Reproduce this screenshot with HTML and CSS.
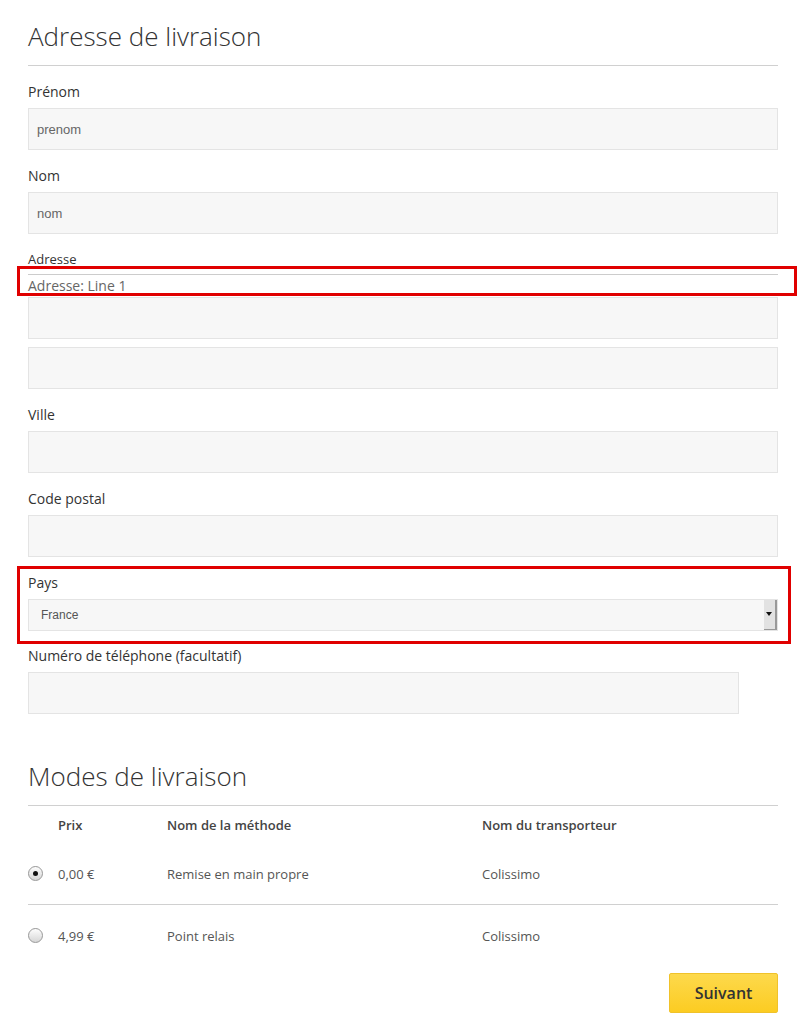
FILE: index.html
```html
<!DOCTYPE html>
<html lang="fr">
<head>
    <meta charset="UTF-8">
    <meta name="viewport" content="width=device-width, initial-scale=1.0">
    <title>Adresse de livraison</title>
    <link rel="stylesheet" href="styles.css">
</head>
<body>
    <div class="page">
        <h1 class="section-title">Adresse de livraison</h1>

        <div class="field">
            <label>Prénom</label>
            <input type="text" placeholder="prenom">
        </div>

        <div class="field">
            <label>Nom</label>
            <input type="text" placeholder="nom">
        </div>

        <div class="field field-address">
            <label class="small-label">Adresse</label>
            <div class="sub-label">Adresse: Line 1</div>
            <input type="text">
            <input type="text" class="second-line">
            <div class="highlight highlight-address"></div>
        </div>

        <div class="field">
            <label>Ville</label>
            <input type="text">
        </div>

        <div class="field">
            <label>Code postal</label>
            <input type="text">
        </div>

        <div class="field field-country">
            <label>Pays</label>
            <div class="select-wrap">
                <select>
                    <option>France</option>
                </select>
                <span class="select-arrow"></span>
            </div>
            <div class="highlight highlight-country"></div>
        </div>

        <div class="field field-phone">
            <label>Numéro de téléphone (facultatif)</label>
            <input type="text" class="short">
        </div>

        <h2 class="section-title modes">Modes de livraison</h2>

        <table class="shipping">
            <thead>
                <tr>
                    <th class="col-radio"></th>
                    <th class="col-price">Prix</th>
                    <th class="col-method">Nom de la méthode</th>
                    <th>Nom du transporteur</th>
                </tr>
            </thead>
            <tbody>
                <tr class="first-row">
                    <td><input type="radio" name="shipping" checked></td>
                    <td>0,00 €</td>
                    <td>Remise en main propre</td>
                    <td>Colissimo</td>
                </tr>
                <tr>
                    <td><input type="radio" name="shipping"></td>
                    <td>4,99 €</td>
                    <td>Point relais</td>
                    <td>Colissimo</td>
                </tr>
            </tbody>
        </table>

        <div class="actions">
            <button class="next">Suivant</button>
        </div>
    </div>
</body>
</html>
```

FILE: styles.css
```css
body {
    margin: 0;
    padding: 0;
    font-family: 'Open Sans', 'Liberation Sans', sans-serif;
    color: #333;
    background: #fff;
}

.page {
    width: 750px;
    padding: 0 32px 0 28px;
}

.section-title {
    margin: 0;
    padding: 20px 0 13px;
    font-size: 26px;
    line-height: 32px;
    font-weight: 300;
    color: #333;
    border-bottom: 1px solid #d0d0d0;
}

.section-title.modes {
    margin-top: 26px;
}

.field {
    position: relative;
    margin-top: 16px;
}

.field label {
    display: block;
    font-size: 14px;
    line-height: 20px;
    margin-bottom: 6px;
    color: #333;
}

.field input[type="text"] {
    display: block;
    box-sizing: border-box;
    width: 100%;
    height: 42px;
    margin: 0;
    padding: 0 8px;
    border: 1px solid #e4e4e4;
    background: #f7f7f7;
    font-family: 'Liberation Sans', Arial, sans-serif;
    font-size: 13px;
    color: #666;
    outline: none;
}

.field input::placeholder {
    color: #666;
}

.field input.short {
    width: 711px;
}

.field label.small-label {
    font-size: 13px;
    line-height: 18px;
    margin-bottom: 6px;
}

.sub-label {
    border-top: 1px solid #ccc;
    font-size: 14px;
    line-height: 21px;
    color: #666;
    margin-bottom: 1px;
}

.field input.second-line {
    margin-top: 8px;
}

.select-wrap {
    position: relative;
}

.select-wrap select {
    display: block;
    width: 100%;
    height: 32px;
    margin: 0;
    padding: 0 12px;
    border: 1px solid #e4e4e4;
    background: #f7f7f7;
    font-family: 'Liberation Sans', Arial, sans-serif;
    font-size: 12px;
    color: #555;
    -webkit-appearance: none;
    appearance: none;
    border-radius: 0;
    outline: none;
}

.select-arrow {
    position: absolute;
    top: 1px;
    right: 1px;
    width: 11px;
    height: 29px;
    background: #e2e2e2;
    border-right: 2px solid #999;
    border-bottom: 1px solid #999;
}

.select-arrow::after {
    content: '';
    position: absolute;
    top: 12px;
    left: 2px;
    border-left: 3px solid transparent;
    border-right: 3px solid transparent;
    border-top: 4px solid #111;
}

.field-phone {
    margin-top: 15px;
}

.highlight {
    position: absolute;
    border: 3px solid #e00000;
    pointer-events: none;
}

.highlight-address {
    left: -11px;
    right: -19px;
    top: 16px;
    height: 24px;
}

.highlight-country {
    left: -11px;
    right: -13px;
    top: -7px;
    height: 72px;
}

.shipping {
    width: 100%;
    border-collapse: collapse;
    font-size: 13px;
    color: #555;
}

.shipping th {
    text-align: left;
    font-weight: 600;
    color: #444;
    height: 37px;
    padding: 0;
    vertical-align: middle;
}

.shipping td {
    height: 61px;
    padding: 0;
    vertical-align: middle;
}

.shipping tr.first-row td {
    border-bottom: 1px solid #d0d0d0;
}

.col-radio {
    width: 30px;
}

.col-price {
    width: 109px;
}

.col-method {
    width: 315px;
}

.shipping input[type="radio"] {
    -webkit-appearance: none;
    appearance: none;
    display: block;
    box-sizing: border-box;
    width: 15px;
    height: 15px;
    margin: 0;
    border: 1px solid #999;
    border-radius: 50%;
    background: linear-gradient(#fdfdfd, #d6d6d6);
    position: relative;
}

.shipping input[type="radio"]:checked::after {
    content: '';
    position: absolute;
    top: 4px;
    left: 4px;
    width: 5px;
    height: 5px;
    border-radius: 50%;
    background: #111;
}

.actions {
    display: flex;
    justify-content: flex-end;
    margin-top: 7px;
}

.next {
    width: 109px;
    height: 40px;
    border: 1px solid #f0c22a;
    border-radius: 2px;
    background: linear-gradient(#fdd94c, #fccc22);
    font-family: 'Open Sans', 'Liberation Sans', sans-serif;
    font-size: 16px;
    font-weight: 600;
    color: #333;
    cursor: pointer;
}
```
